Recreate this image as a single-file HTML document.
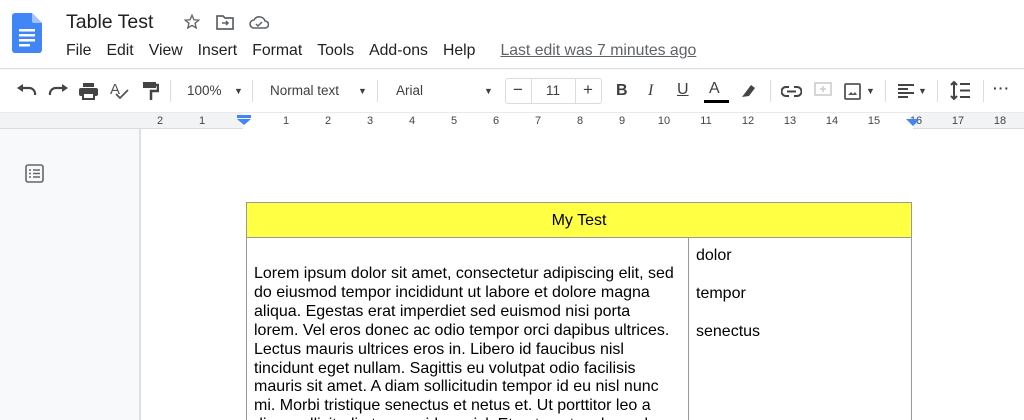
<!DOCTYPE html><html><head><style>
*{margin:0;padding:0;box-sizing:border-box}
html,body{width:1024px;height:420px;overflow:hidden}
body{background:#f8f9fa;font-family:"Liberation Sans",Arial,sans-serif;position:relative;color:#3c4043}
.a{position:absolute}
.hdr{left:0;top:0;width:1024px;height:69px;background:#fff;border-bottom:1px solid #dadce0}
.tb{left:0;top:70px;width:1024px;height:42px;background:#fff}
.menu span{margin-right:15px}
.ruler{left:0;top:112px;width:1024px;height:17px;background:#f1f3f4;border-bottom:1px solid #dadce0;border-top:1px solid #e8eaed}
.rl{position:absolute;top:2px;font-size:11px;color:#444;transform:translateX(-50%)}
.page{left:140px;top:129px;width:884px;height:291px;background:#fff;border-left:1px solid #e0e0e0}
.sep{position:absolute;top:10px;width:1px;height:22px;background:#dadce0}
.tt{font-size:13.5px;color:#3c4043;position:absolute;top:13px}
.ic{position:absolute;top:11px}
</style></head><body>
<div class="a hdr">
<svg class="a" style="left:12px;top:13px" width="30" height="40" viewBox="0 0 30 40"><path d="M3 0h17l10 10v27a3 3 0 0 1-3 3H3a3 3 0 0 1-3-3V3a3 3 0 0 1 3-3z" fill="#4285f4"/><path d="M20 0l10 10H22a2 2 0 0 1-2-2z" fill="#a1c2fa"/><rect x="7" y="16" width="16" height="2.5" fill="#fff"/><rect x="7" y="21" width="16" height="2.5" fill="#fff"/><rect x="7" y="26" width="16" height="2.5" fill="#fff"/><rect x="7" y="31" width="11" height="2.5" fill="#fff"/></svg>
<div class="a" style="left:66px;top:11px;font-size:19.5px;color:#202124">Table Test</div>
<svg class="a" style="left:183px;top:13px" width="18" height="18" viewBox="0 0 24 24"><path d="M12 3l2.6 6 6.4.5-4.9 4.2 1.5 6.3L12 16.6 6.4 20l1.5-6.3L3 9.5 9.4 9z" fill="none" stroke="#5f6368" stroke-width="1.8"/></svg>
<svg class="a" style="left:216px;top:14px" width="18" height="16" viewBox="0 0 18 16"><path d="M1 2h6l2 2h8v11H1z" fill="none" stroke="#5f6368" stroke-width="1.7"/><path d="M6 9h6M10 7l2 2-2 2" fill="none" stroke="#5f6368" stroke-width="1.5"/></svg>
<svg class="a" style="left:249px;top:15px" width="20" height="14" viewBox="0 0 20 14"><path d="M5 13a4 4 0 0 1 0-8 6 6 0 0 1 11 1 3.5 3.5 0 0 1 0 7z" fill="none" stroke="#5f6368" stroke-width="1.6"/><path d="M7 9l2 2 4-4" fill="none" stroke="#5f6368" stroke-width="1.5"/></svg>
<div class="a menu" style="left:66px;top:42px;font-size:15.8px;color:#202124;white-space:nowrap"><span>File</span><span>Edit</span><span>View</span><span>Insert</span><span>Format</span><span>Tools</span><span>Add-ons</span><span>Help</span><span style="color:#5f6368;text-decoration:underline;margin-left:10px">Last edit was 7 minutes ago</span></div>
</div>
<div class="a tb">
<svg class="ic" style="left:17px;top:14px" width="20" height="14" viewBox="0 0 20 14"><path d="M4 4h8a6 6 0 0 1 6 7" fill="none" stroke="#444" stroke-width="2.2"/><path d="M0 4l6-4v8z" fill="#444"/></svg>
<svg class="ic" style="left:48px;top:14px" width="20" height="14" viewBox="0 0 20 14"><path d="M16 4H8a6 6 0 0 0-6 7" fill="none" stroke="#444" stroke-width="2.2"/><path d="M20 4l-6-4v8z" fill="#444"/></svg>
<svg class="ic" style="left:79px;top:13px" width="19" height="17" viewBox="0 0 19 17"><rect x="4" y="0" width="11" height="4" fill="#444"/><rect x="0" y="5" width="19" height="8" rx="2" fill="#444"/><rect x="4" y="10" width="11" height="6" fill="#fff" stroke="#444" stroke-width="2"/></svg>
<div class="tt" style="left:110px;top:11px;font-size:15px;color:#555">A</div><svg class="ic" style="left:115px;top:19px" width="14" height="10"><path d="M1 5l4 4 8-8" fill="none" stroke="#555" stroke-width="1.8"/></svg>
<svg class="ic" style="left:143px;top:12px" width="16" height="18" viewBox="0 0 16 18"><rect x="0" y="0" width="13" height="6" fill="#444"/><path d="M13 3h2v6H8v9" fill="none" stroke="#444" stroke-width="2.5"/></svg>
<div class="sep" style="left:170px"></div>
<div class="tt" style="left:187px">100%</div><div class="tt" style="left:234px;font-size:9px;top:16px">▼</div>
<div class="sep" style="left:252px"></div>
<div class="tt" style="left:270px">Normal text</div><div class="tt" style="left:358px;font-size:9px;top:16px">▼</div>
<div class="sep" style="left:377px"></div>
<div class="tt" style="left:396px">Arial</div><div class="tt" style="left:484px;font-size:9px;top:16px">▼</div>
<div class="a" style="left:505px;top:8px;width:97px;height:26px;border:1px solid #dadce0;border-radius:3px"></div>
<div class="a" style="left:531px;top:8px;width:1px;height:26px;background:#dadce0"></div>
<div class="a" style="left:575px;top:8px;width:1px;height:26px;background:#dadce0"></div>
<div class="tt" style="left:513px;font-size:17px;top:10px">−</div>
<div class="tt" style="left:546px">11</div>
<div class="tt" style="left:583px;font-size:17px;top:10px">+</div>
<div class="tt" style="left:616px;font-size:16px;font-weight:bold;top:12px">B</div>
<div class="tt" style="left:648px;font-size:16px;font-style:italic;top:12px;font-family:'Liberation Serif'">I</div>
<div class="tt" style="left:677px;font-size:16px;top:11px;text-decoration:underline">U</div>
<div class="tt" style="left:709px;font-size:16px;top:10px">A</div><div class="a" style="left:704px;top:30px;width:25px;height:3px;background:#000"></div>
<svg class="ic" style="left:741px;top:12px" width="17" height="16" viewBox="0 0 17 16"><path d="M1 15l3-4 6-8 4 3-6 8z" fill="#444"/></svg>
<div class="sep" style="left:770px"></div>
<svg class="ic" style="left:781px;top:16px" width="21" height="11" viewBox="0 0 21 11"><path d="M8 1H5a4.5 4.5 0 0 0 0 9h3M13 1h3a4.5 4.5 0 0 1 0 9h-3M6 5.5h9" fill="none" stroke="#444" stroke-width="2"/></svg>
<svg class="ic" style="left:814px;top:12px" width="18" height="17" viewBox="0 0 18 17"><rect x="1" y="1" width="16" height="12" fill="none" stroke="#ccc" stroke-width="1.6"/><path d="M9 4v6M6 7h6" stroke="#ccc" stroke-width="1.5"/></svg>
<svg class="ic" style="left:844px;top:13px" width="17" height="17" viewBox="0 0 17 17"><rect x="1" y="1" width="15" height="15" rx="1" fill="none" stroke="#555" stroke-width="1.8"/><path d="M4 12l3-3 2 2 2-2 2 3z" fill="#555"/></svg>
<div class="tt" style="left:866px;font-size:9px;top:16px">▼</div>
<div class="sep" style="left:885px"></div>
<svg class="ic" style="left:898px;top:14px" width="16" height="14"><path d="M0 1h16M0 5h10M0 9h16M0 13h10" stroke="#444" stroke-width="2"/></svg>
<div class="tt" style="left:918px;font-size:9px;top:16px">▼</div>
<div class="sep" style="left:937px"></div>
<svg class="ic" style="left:950px;top:11px" width="20" height="19"><path d="M4 1v17M1 4l3-3 3 3M1 15l3 3 3-3M10 3h10M10 9.5h10M10 16h10" fill="none" stroke="#444" stroke-width="2"/></svg>
<div class="sep" style="left:983px"></div>
<div class="tt" style="left:993px;font-size:14px;top:10px;letter-spacing:1px;font-weight:bold">···</div>
</div>
<div class="a ruler">
<div class="a" style="left:243px;top:0;width:670px;height:16px;background:#fff"></div>
<div class="rl" style="left:160px">2</div><div class="rl" style="left:202px">1</div>
<div class="rl" style="left:286px">1</div><div class="rl" style="left:328px">2</div><div class="rl" style="left:370px">3</div><div class="rl" style="left:412px">4</div><div class="rl" style="left:454px">5</div><div class="rl" style="left:496px">6</div><div class="rl" style="left:538px">7</div><div class="rl" style="left:580px">8</div><div class="rl" style="left:622px">9</div><div class="rl" style="left:664px">10</div><div class="rl" style="left:706px">11</div><div class="rl" style="left:748px">12</div><div class="rl" style="left:790px">13</div><div class="rl" style="left:832px">14</div><div class="rl" style="left:874px">15</div><div class="rl" style="left:916px">16</div><div class="rl" style="left:958px">17</div><div class="rl" style="left:1000px">18</div>
<svg class="a" style="left:237px;top:2px" width="14" height="10"><rect x="0" y="0" width="14" height="3" fill="#4285f4"/><path d="M0 4h14l-7 6z" fill="#4285f4"/></svg>
<svg class="a" style="left:906px;top:6px" width="14" height="8"><path d="M0 0h14l-7 7z" fill="#4285f4"/></svg>
</div>
<div class="a" style="left:139px;top:129px;width:1px;height:291px;background:#e0e0e0"></div>
<svg class="a" style="left:25px;top:164px" width="19" height="19" viewBox="0 0 19 19"><rect x="1" y="1" width="17" height="17" rx="2" fill="none" stroke="#666" stroke-width="1.6"/><path d="M4 6h2M8 6h7M4 9.5h2M8 9.5h7M4 13h2M8 13h7" stroke="#666" stroke-width="1.5"/></svg>
<div class="a page"></div>
<div class="a" style="left:246px;top:202px;width:666px;height:230px;border:1px solid #999;background:#fff"></div>
<div class="a" style="left:247px;top:203px;width:664px;height:35px;background:#ffff44;border-bottom:1px solid #999;text-align:center;font-size:16px;color:#000;line-height:35px">My Test</div>
<div class="a" style="left:688px;top:238px;width:1px;height:190px;background:#999"></div>
<div class="a" style="left:254px;top:265px;width:434px;font-size:16px;line-height:18.9px;color:#000;white-space:nowrap">Lorem ipsum dolor sit amet, consectetur adipiscing elit, sed<br>do eiusmod tempor incididunt ut labore et dolore magna<br>aliqua. Egestas erat imperdiet sed euismod nisi porta<br>lorem. Vel eros donec ac odio tempor orci dapibus ultrices.<br>Lectus mauris ultrices eros in. Libero id faucibus nisl<br>tincidunt eget nullam. Sagittis eu volutpat odio facilisis<br>mauris sit amet. A diam sollicitudin tempor id eu nisl nunc<br>mi. Morbi tristique senectus et netus et. Ut porttitor leo a<br>diam sollicitudin tempor id eu nisl. Et netus et malesuada</div>
<div class="a" style="left:696px;top:247px;font-size:16px;color:#000;line-height:18px">dolor</div>
<div class="a" style="left:696px;top:285px;font-size:16px;color:#000;line-height:18px">tempor</div>
<div class="a" style="left:696px;top:323px;font-size:16px;color:#000;line-height:18px">senectus</div>
</body></html>
